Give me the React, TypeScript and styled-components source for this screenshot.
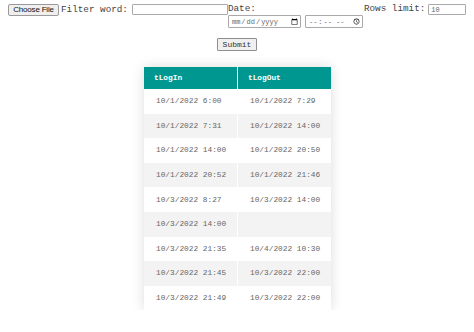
import React from "react";
import styled, { createGlobalStyle } from "styled-components";

const GlobalStyle = createGlobalStyle`
  html, body {
    margin: 0;
    padding: 0;
    background: #ffffff;
    font-family: "Liberation Mono", "Courier New", monospace;
    color: #333333;
  }
`;

const Form = styled.form`
  display: flex;
  align-items: flex-start;
  padding: 4px 0 0 8px;
  font-size: 9.3px;
`;

const FileButton = styled.button`
  width: 51px;
  height: 12px;
  margin: 0 2px 0 0;
  padding: 0;
  font-family: "Liberation Sans", Arial, sans-serif;
  font-size: 8px;
  line-height: 10px;
  letter-spacing: -0.2px;
  color: #111111;
  background: #efefef;
  border: 1px solid #9a9a9a;
  border-radius: 2px;
`;

const Label = styled.span<{ $top?: number; $gap?: number }>`
  display: inline-block;
  margin-top: ${(p) => p.$top ?? 1}px;
  margin-right: ${(p) => p.$gap ?? 0}px;
  line-height: 10px;
  white-space: pre;
  color: #444444;
`;

const TextInput = styled.input<{ $width: number }>`
  box-sizing: border-box;
  width: ${(p) => p.$width}px;
  height: 11px;
  margin: 0;
  padding: 0 2px;
  font-family: "Liberation Mono", monospace;
  font-size: 7px;
  color: #666666;
  border: 1px solid #a9a9a9;
  border-radius: 1px;
  outline: none;
`;

const DateGroup = styled.div`
  display: flex;
  flex-direction: column;
  width: 136px;
`;

const DateRow = styled.div`
  display: flex;
  gap: 4px;
  margin-top: 1px;
`;

const PickerInput = styled.input<{ $width: number }>`
  box-sizing: border-box;
  width: ${(p) => p.$width}px;
  height: 13px;
  margin: 0;
  padding: 0 2px;
  font-family: "Liberation Mono", monospace;
  font-size: 7px;
  color: #666666;
  border: 1px solid #a9a9a9;
  border-radius: 1px;
  &::-webkit-calendar-picker-indicator {
    width: 7px;
    height: 7px;
    margin: 0;
    padding: 0;
  }
`;

const SubmitRow = styled.div`
  display: flex;
  justify-content: center;
  margin-top: 10px;
`;

const SubmitButton = styled.button`
  width: 40px;
  height: 13px;
  padding: 0;
  font-family: "Liberation Mono", monospace;
  font-size: 8px;
  line-height: 11px;
  color: #333333;
  background: #f0f0f0;
  border: 1px solid #8f8f8f;
  border-radius: 1px;
`;

const TableWrap = styled.div`
  display: flex;
  justify-content: center;
  margin-top: 16px;
`;

const StyledTable = styled.table`
  width: 187px;
  border-collapse: collapse;
  table-layout: fixed;
  font-family: "Liberation Mono", monospace;
  font-size: 7.8px;
  box-shadow: 0 0 12px rgba(0, 0, 0, 0.14);
  margin-left: 1px;
`;

const StyledTh = styled.th`
  height: 22px;
  padding: 0 0 0 10px;
  text-align: left;
  font-weight: bold;
  color: #ffffff;
  background: #009790;
  & + & {
    border-left: 1px solid #ffffff;
  }
`;

const StyledTr = styled.tr`
  background: #ffffff;
  &:nth-child(even) {
    background: #f3f3f3;
  }
`;

const StyledTd = styled.td`
  height: 24.6px;
  padding: 0 0 0 12px;
  color: #666666;
  & + & {
    border-left: 1px solid #ffffff;
  }
`;

const rows: [string, string][] = [
  ["10/1/2022 6:00", "10/1/2022 7:29"],
  ["10/1/2022 7:31", "10/1/2022 14:00"],
  ["10/1/2022 14:00", "10/1/2022 20:50"],
  ["10/1/2022 20:52", "10/1/2022 21:46"],
  ["10/3/2022 8:27", "10/3/2022 14:00"],
  ["10/3/2022 14:00", ""],
  ["10/3/2022 21:35", "10/4/2022 10:30"],
  ["10/3/2022 21:45", "10/3/2022 22:00"],
  ["10/3/2022 21:49", "10/3/2022 22:00"],
];

const App: React.FC = () => {
  return (
    <>
      <GlobalStyle />
      <Form onSubmit={(e) => e.preventDefault()}>
        <FileButton type="button">Choose File</FileButton>
        <Label $top={1} $gap={4}>Filter word:</Label>
        <TextInput type="text" $width={96} />
        <DateGroup>
          <Label $top={0}>Date:</Label>
          <DateRow>
            <PickerInput type="date" $width={73} />
            <PickerInput type="time" $width={58} />
          </DateRow>
        </DateGroup>
        <Label $top={0} $gap={3}>Rows limit:</Label>
        <TextInput type="text" $width={38} defaultValue="10" />
      </Form>
      <SubmitRow>
        <SubmitButton type="button">Submit</SubmitButton>
      </SubmitRow>
      <TableWrap>
        <StyledTable>
          <thead>
            <tr>
              <StyledTh>tLogIn</StyledTh>
              <StyledTh>tLogOut</StyledTh>
            </tr>
          </thead>
          <tbody>
            {rows.map((row: [string, string], index: number): JSX.Element => {
              return (
                <StyledTr key={index}>
                  <StyledTd>{row[0]}</StyledTd>
                  <StyledTd>{row[1]}</StyledTd>
                </StyledTr>
              );
            })}
          </tbody>
        </StyledTable>
      </TableWrap>
    </>
  );
};

export default App;
